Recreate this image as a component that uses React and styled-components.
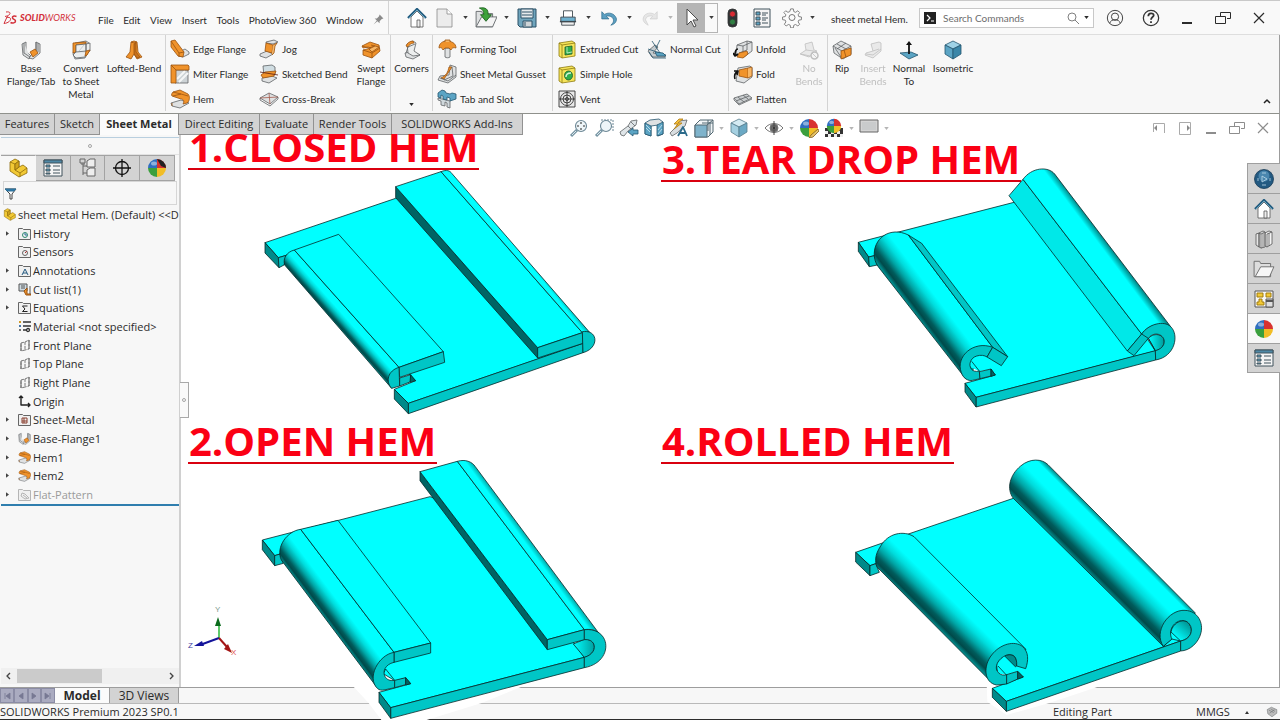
import React from "react";
import styled, { createGlobalStyle } from "styled-components";

const GlobalStyle = createGlobalStyle`
  * {
    box-sizing: border-box;
  }
  body {
    margin: 0;
    background: #fff;
    color: #2b2b2b;
    font-family: "Open Sans", "Noto Sans", sans-serif;
    font-size: 11px;
  }
  button, input {
    font: inherit;
    color: inherit;
  }
  svg {
    display: block;
    flex: none;
  }
`;

const Page = styled.div`
  height: 100vh;
  display: flex;
  flex-direction: column;
  overflow: hidden;
  background: #fff;
`;

const PlainButton = styled.button`
  display: flex;
  align-items: center;
  justify-content: center;
  padding: 0;
  border: 0;
  background: none;
  cursor: pointer;
`;

/* ---------- title bar ---------- */

const TitleBar = styled.header`
  height: 35px;
  flex: none;
  display: flex;
  align-items: center;
  background: #f9f9f9;
  border-top: 1px solid #c9c9c9;
  border-bottom: 1px solid #dedede;
  font-family: Lato, "Open Sans", sans-serif;
  font-size: 10px;
`;

const Brand = styled.div`
  width: 96px;
  padding-left: 3px;
  display: flex;
  align-items: center;
  gap: 3px;
  color: #d3313b;
  font-size: 9px;
  font-style: italic;
  white-space: nowrap;

  b {
    font-weight: 900;
  }
`;

const Menu = styled.nav`
  width: 293px;
  height: 100%;
  padding: 4px 4px 0 2px;
  display: flex;
  align-items: center;
  justify-content: space-between;
  border-right: 1px solid #d4d4d4;
`;

const QuickTools = styled.div`
  display: flex;
  align-items: center;
  padding-left: 14px;
`;

const ToolCell = styled(PlainButton)`
  width: ${props => props.w || 28}px;
  height: 28px;
`;

const CaretCell = styled(PlainButton)`
  width: ${props => props.w || 13}px;
  height: 28px;
  color: ${props => (props.dim ? "#b5b5b5" : "#3c3c3c")};
`;

const PointerBox = styled.div`
  display: flex;
  border: 1px solid #b4b4b4;

  ${ToolCell} {
    background: #b5b5b5;
  }
`;

const DocName = styled.div`
  margin-left: 12px;
  padding-top: 2px;
  white-space: nowrap;
`;

const SearchBox = styled.label`
  width: 175px;
  height: 20px;
  margin-left: auto;
  padding: 0 4px;
  display: flex;
  align-items: center;
  gap: 5px;
  background: #fff;
  border: 1px solid #c8c8c8;

  input {
    flex: 1;
    min-width: 0;
    padding: 0 0 0 2px;
    border: 0;
    outline: 0;
    background: none;
  }
  input::placeholder {
    color: #6d6d6d;
    opacity: 1;
  }
`;

const WindowButtons = styled.div`
  display: flex;
  padding: 0 3px;

  ${ToolCell} {
    width: 36px;
  }
`;

/* ---------- ribbon ---------- */

const Ribbon = styled.div`
  height: 79px;
  flex: none;
  display: flex;
  background: #f7f7f7;
  border-right: 1px solid #9c9c9c;
  border-bottom: 1px solid #8f918c;
  font-family: Lato, "Open Sans", sans-serif;
  font-size: 10px;
`;

const Group = styled.div`
  display: flex;
  width: ${props => props.w}px;
  height: 76px;
  padding-left: ${props => props.pad || 0}px;
  border-right: 1px solid #d3d3d3;
`;

const LastGroup = styled.div`
  flex: 1;
  display: flex;
`;

const Stack = styled.div`
  width: ${props => props.w}px;
  display: grid;
  grid-template-rows: repeat(3, 1fr);
`;

const SmallButton = styled(PlainButton)`
  justify-content: flex-start;
  gap: 3px;
  padding-top: 2px;
  white-space: nowrap;
`;

const BigButton = styled(PlainButton)`
  width: ${props => props.w}px;
  flex-direction: column;
  justify-content: flex-start;
  gap: 2px;
  padding-top: 5px;
  line-height: 13px;
  color: ${props => (props.disabled ? "#b9b9b9" : "inherit")};
  opacity: ${props => (props.disabled ? 0.9 : 1)};

  svg {
    filter: ${props => (props.disabled ? "grayscale(1) opacity(0.35)" : "none")};
  }
`;

const DropArrow = styled.span`
  margin-top: 26px;
`;

const Collapse = styled(PlainButton)`
  margin: auto 5px 5px auto;
  width: 14px;
  height: 14px;
`;

/* ---------- command tabs + view tools ---------- */

const TabRow = styled.div`
  height: 21px;
  flex: none;
  display: flex;
  align-items: flex-start;
  justify-content: space-between;
  border-right: 1px solid #9c9c9c;
`;

const Tabs = styled.div`
  display: flex;
  width: 523px;
  height: 21px;
`;

const Tab = styled.button`
  width: ${props => props.w}px;
  padding: 0 0 2px;
  border: 0;
  border-right: 1px solid #929292;
  border-bottom: ${props => (props.active ? "0" : "1px solid #929292")};
  background: ${props => (props.active ? "#fbfbfb" : "#d3d3d3")};
  font-weight: ${props => (props.active ? 700 : 400)};
  white-space: nowrap;
`;

const ViewTools = styled.div`
  display: flex;
  align-items: center;
  margin-right: auto;
  margin-left: 43px;
`;

const ViewCell = styled(PlainButton)`
  width: 25px;
  height: 28px;
`;

const DocButtons = styled.div`
  display: flex;
  padding-right: 3px;
  color: #8d8d8d;

  ${ViewCell} {
    width: 26px;
  }
`;

/* ---------- workspace ---------- */

const Workspace = styled.div`
  flex: 1;
  min-height: 0;
  display: flex;
`;

const SidePanel = styled.aside`
  width: 181px;
  flex: none;
  display: flex;
  flex-direction: column;
  padding-left: 1px;
  background: #f7f7f7;
  border-right: 2px solid #d0d0d0;
`;

const Grip = styled.div`
  height: 18px;
  margin-top: 2px;
  display: flex;
  align-items: center;
  justify-content: center;
  border-top: 1px solid #b9cfdf;
  border-bottom: 1px solid #e2e2e2;
`;

const Dot = styled.i`
  width: 4px;
  height: 4px;
  border: 1px solid #a5a5a5;
  border-radius: 50%;
`;

const PanelTabs = styled.div`
  display: flex;
  height: 26px;
  margin: 0 4px 0 0;
`;

const PanelTab = styled(PlainButton)`
  flex: 1;
  border: 1px solid #a3a3a3;
  border-left: 0;
  border-color: ${props => (props.active ? "#a3a3a3 #f7f7f7 #f7f7f7" : "#a3a3a3")};
  background: ${props => (props.active ? "#f7f7f7" : "#d3d3d3")};
`;

const FilterBox = styled.label`
  display: flex;
  align-items: center;
  height: 24px;
  margin: 0 2px;
  border: 1px solid #d6d6d6;

  input {
    flex: 1;
    min-width: 0;
    border: 0;
    outline: 0;
    background: none;
  }
`;

const Tree = styled.ul`
  height: 301px;
  margin: 0;
  padding: 0;
  display: grid;
  grid-auto-rows: 1fr;
  list-style: none;
  border-bottom: 2px solid #2f7eae;
  overflow: hidden;
`;

const TreeRow = styled.li`
  display: flex;
  align-items: center;
  gap: 2px;
  padding-left: ${props => (props.root ? 2 : 0)}px;
  white-space: nowrap;
  color: ${props => (props.dim ? "#9a9a9a" : "inherit")};
`;

const Expander = styled.span`
  width: 15px;
  padding-left: 5px;
`;

const ScrollRow = styled.div`
  display: flex;
  height: 16px;
  margin-top: auto;
  margin-bottom: 3px;
  background: #f0f0f0;
`;

const ScrollButton = styled(PlainButton)`
  width: 16px;
`;

const ScrollTrack = styled.div`
  flex: 1;
  margin: 1px 0;
`;

const ScrollThumb = styled.div`
  width: 58%;
  height: 14px;
  background: #cbcbcb;
`;

const Canvas = styled.main`
  position: relative;
  z-index: 1;
  flex: 1;
  display: flex;
  align-items: flex-start;
  justify-content: flex-end;
  border-right: 1px solid #9c9c9c;
`;

const Placed = styled.div`
  position: absolute;
  left: ${props => props.x}px;
  top: ${props => props.y}px;
`;

const Caption = styled.h2`
  margin: 0;
  padding: 0 1px;
  color: #fb0014;
  font-size: 40px;
  font-weight: 700;
  line-height: 42px;
  white-space: nowrap;
  border-bottom: 2px solid #d9000f;
`;

const Splitter = styled.div`
  position: absolute;
  left: -1px;
  top: 247px;
  width: 9px;
  height: 36px;
  display: flex;
  align-items: center;
  justify-content: center;
  background: #fafafa;
  border: 1px solid #a9a9a9;
  border-left: 0;
`;

const TaskPane = styled.div`
  width: 33px;
  margin-top: 28px;
  margin-right: -1px;
  display: flex;
  flex-direction: column;
  border: 1px solid #9f9f9f;
  border-right: 0;
`;

const TaskButton = styled(PlainButton)`
  height: 30px;
  background: ${props => (props.active ? "#f7f7f7" : "#d3d3d3")};
  border-bottom: 1px solid #9f9f9f;

  &:last-child {
    height: 28px;
    border-bottom: 0;
  }
`;

/* ---------- bottom ---------- */

const ModelBar = styled.div`
  height: 17px;
  flex: none;
  display: flex;
  background: #f7f7f7;
  border-top: 1px solid #9d9d9d;
  border-bottom: 1px solid #b9b9b9;
`;

const StepButtons = styled.div`
  display: flex;
  width: 55px;

  ${PlainButton} {
    flex: 1;
    background: #aaabc0;
    border: 1px solid #8b8ca5;
    color: #777893;
  }
`;

const ModelTab = styled.button`
  width: ${props => props.w}px;
  padding: 0;
  border: 0;
  border-right: 1px solid #9d9d9d;
  background: ${props => (props.active ? "#fbfbfb" : "#d3d3d3")};
  font-size: 12px;
  line-height: 14px;
  font-weight: ${props => (props.active ? 700 : 400)};
`;

const StatusBar = styled.footer`
  height: 16px;
  flex: none;
  display: flex;
  align-items: center;
  background: #f7f7f7;
  border-bottom: 1px solid #2c2c2c;
  white-space: nowrap;
`;

const StatusText = styled.span`
  width: ${props => (props.w ? props.w + "px" : "auto")};
  margin-left: ${props => (props.right ? "auto" : 0)};
  line-height: 14px;
`;

const StatusIcon = styled.span`
  padding: 0 2px 0 17px;
`;

/* ---------- icons ---------- */

const O = "#f0932b";
const OD = "#9a5310";
const G = "#dfe1e2";
const GD = "#5f6366";
const B = "#5ba4c4";
const BD = "#24566f";

const Icon = ({ size = 20, box = 20, stroke = GD, sw = 0.8, children }) => (
  <svg
    width={size}
    height={size}
    viewBox={`0 0 ${box} ${box}`}
    fill="none"
    stroke={stroke}
    strokeWidth={sw}
    strokeLinejoin="round"
    aria-hidden="true"
  >
    {children}
  </svg>
);

const Caret = ({ size = 5 }) => (
  <svg width={size} height={3} viewBox="0 0 6 4" aria-hidden="true">
    <path d="M0 0h6L3 4z" fill="currentColor" />
  </svg>
);

const BaseFlange = ({ size = 20 }) => (
  <Icon size={size}>
    <path d="M1 4l4-2v9l5 5-2 3-6-4z" fill={G} />
    <path d="M3 3v10l6 4M15 2l4 2v9l-7 6-4-1 3-4 4-3z" fill={G} />
    <path d="M15 2v9M17 3v9" />
    <path d="M9 12l5-3 3 4-5 4z" fill={O} stroke={OD} />
  </Icon>
);

const Convert = () => (
  <Icon>
    <path d="M4 3l11-2 3 2v8l-4 7-10 1-2-5z" fill={G} />
    <path d="M2 3l13-1v2L5 5v7l-3 1z" fill={O} stroke={OD} />
    <path d="M5 5l10-1v7L5 12zM15 4l4-1v8l-4 1zM5 12l-3 3 3 3 9-1 2-4" fill="#edefef" />
    <path d="M15 11l4-1-3 5-2 1z" fill={O} stroke={OD} />
    <path d="M8 11l5-6" stroke="#bcc3c6" />
  </Icon>
);

const Lofted = () => (
  <Icon stroke={OD}>
    <path d="M7 2l3-1 3 1 1 10 4 5-5 2-3-5-3 5-5-2 4-5z" fill={O} />
    <path d="M10 4v10l3 4 3-1-4-5V3z" fill="#c8711a" />
    <path d="M7 2l3 1 3-1" />
  </Icon>
);

const EdgeFlange = () => (
  <Icon>
    <path d="M9 13l6-3 4 3v2l-6 3-4-1z" fill={G} />
    <path d="M1 2l4-1 9 12-1 5-5-1L1 8z" fill={O} stroke={OD} />
    <path d="M1 2l8 12v4M9 14l5-1" stroke={OD} />
  </Icon>
);

const Miter = () => (
  <Icon>
    <path d="M5 6h13v13H5z" fill="#cdd3d6" />
    <path d="M7 15l8-8M9 18l9-9" stroke="#f5f6f6" strokeWidth="2" />
    <path d="M1 1h17l1 1v4H6v13H1z" fill={O} stroke={OD} />
    <path d="M1 1l5 5" stroke={OD} />
  </Icon>
);

const Hem = ({ size = 20 }) => (
  <Icon size={size}>
    <path d="M1 14l10-3 8 3-9 5-8-2z" fill={G} />
    <path d="M3 3l7-2 8 4c2 2 2 7-1 9l-4 1c2-3 0-5-2-5l-9-3C1 6 2 4 3 3z" fill={O} stroke={OD} />
    <path d="M3 7l8-2 7 2M3 3l8 2M2 14v3" stroke={OD} />
  </Icon>
);

const Jog = () => (
  <Icon>
    <path d="M1 15l7-3 6 3-7 4-6-2z" fill={G} />
    <path d="M7 3l8-2 4 2-5 2-7-1z" fill={G} />
    <path d="M7 4l7 2-1 8-7-2z" fill={O} stroke={OD} />
    <path d="M14 6l4-2-2 3-1 7-2 2" fill="#f8b766" stroke={OD} />
  </Icon>
);

const SketchedBend = () => (
  <Icon>
    <path d="M4 2l9-1 3 2v7l-11 2z" fill="#d0dde2" />
    <path d="M3 14l10-2 5 2-8 5-7-2z" fill={G} />
    <path d="M2 11l4-3 11-1-2 5-11 2z" fill={O} stroke={OD} />
    <path d="M1 8l18 3" stroke="#5a1c12" />
  </Icon>
);

const CrossBreak = () => (
  <Icon>
    <path d="M1 9l9-5 9 4-8 7z" fill={G} />
    <path d="M1 9l18-1M10 4l1 11" stroke="#a65a4c" />
    <path d="M1 9v2l10 6 8-7V8" />
  </Icon>
);

const Swept = () => (
  <Icon stroke={OD}>
    <path d="M1 6l8-4 9 3 1 6-8 7-9-3v-5l8-2-3-1-5 1z" fill={O} />
    <path d="M1 6l7 2 6-2-4-1M11 18v-5l8-5M11 13l-9-3" />
    <path d="M8 9l6-3 4 1-7 5z" fill="#f8b766" />
  </Icon>
);

const Corners = () => (
  <Icon>
    <path d="M3 13l7-1 8 3-7 4-7-2z" fill={G} />
    <path d="M5 4l6-3 3 2-2 8 6 4-7 1-5-3z" fill="#eceeee" />
    <path d="M4 6c1-3 4-5 7-5l1 2c-3 0-5 2-6 4z" fill={O} stroke={OD} />
    <path d="M6 7l7-3M4 13l2-6" />
  </Icon>
);

const Forming = () => (
  <Icon>
    <path d="M8 9h5v9c-1 1-4 1-5 0z" fill={G} />
    <path d="M2 9c0-5 4-7 8-7s9 2 9 7c-3-1-4 0-5 2l-2-2H8l-2 2C5 9 4 8 2 9z" fill={O} stroke={OD} />
    <path d="M8 3V1h5v2" fill="#f8b766" stroke={OD} />
  </Icon>
);

const Gusset = () => (
  <Icon>
    <path d="M13 1l6 2v10l-8 6-10-3 2-4 9-1z" fill={G} />
    <path d="M15 3L7 15l-3-1c5-2 7-6 8-11z" fill={O} stroke={OD} />
    <path d="M15 3l1 9-9 4M3 14l8 3 8-6" />
  </Icon>
);

const TabSlot = () => (
  <Icon stroke={BD}>
    <path d="M1 9l12 3v7l-3-1v-4l-2-1v4l-4-1v-4l-3-1z" fill="#cfd8dc" stroke={GD} />
    <path d="M1 4l4-3 3 1 1 2 4 1 2-1 4 1v5l-6 2v-3l-3-1v3l-4-1V7L4 6v3L1 8z" fill={B} />
  </Icon>
);

const Extruded = () => (
  <Icon stroke="#8d7a10">
    <path d="M2 4l13-2 3 2v13l-13 2-3-2z" fill="#f6e45a" />
    <path d="M5 6l13-2M5 6v13M2 4l3 2" />
    <path d="M8 8l7-1v8l-7 1z" fill="#2fae4e" stroke="#1f5c2c" />
    <path d="M10 8v6l5-1" stroke="#d2f3d5" />
  </Icon>
);

const SimpleHole = () => (
  <Icon stroke="#8d7a10">
    <path d="M2 4l13-2 3 2v13l-13 2-3-2z" fill="#f6e45a" />
    <path d="M5 6l13-2M5 6v13M2 4l3 2" />
    <ellipse cx="11.500" cy="11.500" rx="4" ry="4.500" fill="#2fae4e" stroke="#1f5c2c" />
    <path d="M9 13c0-3 2-4 5-4" stroke="#d2f3d5" strokeWidth="1.500" />
  </Icon>
);

const Vent = () => (
  <Icon stroke="#333" sw={0.9}>
    <path d="M2 2h16v16H2z" fill="#e9e9e9" />
    <circle cx="10" cy="10" r="6.500" />
    <circle cx="10" cy="10" r="4" />
    <circle cx="10" cy="10" r="1.500" />
    <path d="M10 2v16M2 10h16" />
  </Icon>
);

const NormalCut = () => (
  <Icon>
    <path d="M1 12l7-6 3 2-5 6 12 2v2H5z" fill="#c4ccd0" />
    <path d="M5 2l8 12M13 1L9 9M1 10l18 6M2 13l4 6h13" stroke={BD} />
    <path d="M8 13l8 1 3 3h-9z" fill={B} stroke={BD} />
  </Icon>
);

const Unfold = () => (
  <Icon>
    <path d="M4 6l10-4 5 1v9l-8 6-8-2z" fill={G} />
    <path d="M4 6l6 1v9M10 7l9-4M14 2v9l-8 3" />
    <path d="M6 14l8-2 1 3-5 4-6-1z" fill={O} stroke={OD} />
    <path d="M5 10c-3 0-3 3-3 6M0 14l2 3 3-2" stroke="#111" strokeWidth="1.600" />
  </Icon>
);

const Fold = () => (
  <Icon>
    <path d="M5 4l12-2 2 2v9l-8 6-8-2z" fill={G} />
    <path d="M6 6l9-2v10l-9-2z" fill={O} stroke={OD} />
    <path d="M15 4l4-1v9l-4 2" fill="#f8b766" stroke={OD} />
    <path d="M2 15c-1-4 0-6 2-7M1 7l4 0-1 4" stroke="#111" strokeWidth="1.600" />
  </Icon>
);

const Flatten = () => (
  <Icon>
    <path d="M1 9l13-4 5 4-13 6z" fill="#c9cdcf" />
    <path d="M5 8l6 5M10 6l5 4M3 12l13-5M1 9v2l5 5 13-6" />
  </Icon>
);

const NoBends = () => (
  <Icon stroke="#444">
    <path d="M6 4l7-2 2 8 3 1-8 6-9-3 6-4z" fill="#ccc" />
    <path d="M7 10l8 1M2 14l9 2" />
    <circle cx="15.500" cy="15.500" r="3.500" fill="#eee" strokeWidth="1.500" />
    <path d="M13 13l5 5" />
  </Icon>
);

const Rip = () => (
  <Icon>
    <path d="M1 6l8-5 10 5v8l-8 5-9-6z" fill={G} />
    <path d="M1 6l9 5 9-5M10 11v8M5 4l9 5M14 3L5 9M3 8l6 9" />
    <path d="M9 11l10-3v7l-10 4z" fill={O} stroke={OD} />
    <path d="M12 10l2 7" stroke={OD} />
  </Icon>
);

const InsertBends = () => (
  <Icon stroke="#444">
    <path d="M8 4l8-2 2 1v8l-8 7-8-3 1-2 7-2z" fill="#ccc" />
    <path d="M10 11l6-2M3 14l7 1 8-6" />
  </Icon>
);

const NormalTo = () => (
  <Icon stroke={BD}>
    <path d="M1 13l11-1 7 3-9 4z" fill={B} />
    <path d="M10 14V4" stroke="#111" strokeWidth="1.800" />
    <path d="M7 5l3-4 3 4z" fill="#111" stroke="none" />
  </Icon>
);

const IsoCube = ({ size = 20, light }) => (
  <Icon size={size} stroke={light ? "#557b8c" : BD}>
    <path d="M10 1l8 4-8 4-8-4z" fill={light ? "#d5ebf3" : "#9fd2e6"} />
    <path d="M2 5l8 4v10l-8-5z" fill={light ? "#a5d0e1" : B} />
    <path d="M18 5l-8 4v10l8-5z" fill={light ? "#6ba9c4" : "#3b86a8"} />
  </Icon>
);

const HomeIcon = () => (
  <Icon stroke="#555">
    <path d="M4 9v10h12V9l-6-6z" fill="#fff" />
    <path d="M10 12h3v7h-3z" fill="#eee" />
    <path d="M1 10l9-9 9 9" stroke="#235d80" strokeWidth="2.400" />
    <path d="M2 10l8-8 8 8" stroke="#7bb6d0" strokeWidth="0.800" />
  </Icon>
);

const NewDoc = () => (
  <Icon stroke="#8a8a8a">
    <path d="M2 1h10l5 5v13H2z" fill="#ececec" />
    <path d="M12 1v5h5" fill="#fff" />
  </Icon>
);

const OpenDoc = () => (
  <Icon size={22}>
    <path d="M1 4h5l1 2h9v12H1z" fill={G} />
    <path d="M1 18l5-9h14l-4 9z" fill="#f4f4f4" />
    <path d="M4 1c6-1 8 1 8 6h3l-5 6-5-6h3c0-3-1-5-4-6z" fill="#3da23a" stroke="#1f6120" />
  </Icon>
);

const SaveIcon = () => (
  <Icon stroke="#2d5166" sw={1}>
    <path d="M1 1h18v18H3l-2-2z" fill="#6fa5bd" />
    <path d="M4 1h12v9H4z" fill="#e6ebee" />
    <path d="M6 13h9v6H6z" fill="#cfd5d8" />
    <path d="M8 14v4M5 4h10M5 7h10" />
  </Icon>
);

const PrintIcon = () => (
  <Icon size={18} stroke="#3f4a50" sw={1}>
    <path d="M5 9V2h10v7" fill="#fff" />
    <path d="M2 9h16v5H2z" fill="#70b2d0" />
    <path d="M3 14h14v4H3z" fill="#eee" />
    <path d="M1 14h18" strokeWidth="1.600" />
  </Icon>
);

const UndoIcon = ({ dim }) => (
  <Icon size={18} stroke={dim ? "#cfcfcf" : "#2e6c8d"}>
    <path
      d={dim ? "M18 3v8h-8l3-3c-4-1-7 0-8 4l3 6c-6-3-7-7-4-11 3-3 8-3 11-1z" : "M2 3v8h8L7 8c4-1 8 1 8 5 0 2-1 3-3 5 5-1 7-5 6-8C16 5 10 3 5 6z"}
      fill={dim ? "#e6e6e6" : "#5b9fc1"}
    />
  </Icon>
);

const PointerIcon = () => (
  <Icon stroke="#4b4b4b" sw={1}>
    <path d="M5 1v16l4-4 3 6 2-1-3-6h5z" fill="#fff" />
  </Icon>
);

const TrafficIcon = () => (
  <Icon stroke="#333">
    <rect x="6" y="1" width="9" height="18" rx="4" fill="#2e3436" />
    <circle cx="10.500" cy="6" r="3" fill="#d92a33" />
    <circle cx="10.500" cy="14" r="3" fill="#2f7f42" />
  </Icon>
);

const ListIcon = () => (
  <Icon stroke="#41525c" sw={1}>
    <path d="M2 1h16v18H2z" fill="#f4f4f4" />
    <path d="M4 4h4v3H4zM4 9h4v3H4zM4 14h4v3H4z" fill={B} />
    <path d="M10 5h6M10 7h4M10 10h6M10 12h4M10 15h6" />
  </Icon>
);

const WideListIcon = () => (
  <Icon size={20} stroke="#41525c" sw={1}>
    <path d="M1 2h18v16H1z" fill="#f4f4f4" />
    <path d="M1 2h18v3H1z" fill="#4d87a5" />
    <path d="M3 7h4v2H3zM3 11h4v2H3zM3 15h4v1H3z" fill={B} />
    <path d="M10 8h7M10 12h7M10 15h7" />
  </Icon>
);

const GearIcon = () => (
  <Icon stroke="#777" sw={1}>
    <path
      d="M8.500 1h3l.5 3 2 .8 2.500-1.700 2 2-1.700 2.500.7 1.900 3 .5v3l-3 .5-.7 2 1.700 2.500-2 2-2.500-1.700-2 .8-.5 3h-3l-.5-3-2-.8-2.500 1.700-2-2 1.700-2.500-.7-2-3-.5v-3l3-.5.7-1.900L1 5.100l2-2 2.500 1.700 2-.8z"
      transform="translate(1 0) scale(.9)"
      fill="#fbfbfb"
    />
    <circle cx="10" cy="9.500" r="3" />
  </Icon>
);

const PinIcon = () => (
  <Icon size={11} stroke="none">
    <path d="M12 1l7 7-3 1-4 4v4l-4-4-7 6 6-7-4-4h4l4-4z" fill="#8b8b8b" />
  </Icon>
);

const LogoMark = () => (
  <svg width="14" height="14" viewBox="0 0 28 28" fill="none" stroke="#d3313b" strokeWidth="2" aria-hidden="true">
    <path d="M6 2c6-1 10 1 7 5-2 2-5 3-9 4M9 10L2 25c9-1 14-6 13-10-1-2-4-3-8-2" />
    <path d="M27 11c-5-2-9 0-8 3 1 3 6 3 6 6 0 4-6 5-10 3" strokeWidth="3" />
  </svg>
);

const PromptIcon = () => (
  <Icon size={12} box={12} stroke="#fff" sw={1.2}>
    <path d="M0 0h12v12H0z" fill="#222" stroke="none" />
    <path d="M3 3l3 3-3 3M7 9h3" />
  </Icon>
);

const Lens = () => (
  <Icon size={12} box={12} stroke="#808080" sw={1}>
    <circle cx="5" cy="5" r="4" />
    <path d="M8 8l4 4" />
  </Icon>
);

const UserIcon = () => (
  <Icon size={18} stroke="#444" sw={1.1}>
    <circle cx="10" cy="10" r="8.500" />
    <circle cx="10" cy="8.500" r="4" />
    <path d="M4 16c1-3 3-4 6-4s5 1 6 4" />
  </Icon>
);

const HelpIcon = () => (
  <Icon size={18} stroke="#333" sw={1.4}>
    <circle cx="10" cy="10" r="8.500" />
    <path d="M7 8c0-4 6-4 6-1 0 2-3 2-3 5" strokeWidth="2" />
    <path d="M10 13.500v2" strokeWidth="2" />
  </Icon>
);

const MinIcon = () => (
  <Icon size={16} box={16} stroke="currentColor" sw={2}>
    <path d="M3 13h10" />
  </Icon>
);

const RestoreIcon = () => (
  <Icon size={16} box={16} stroke="currentColor" sw={1}>
    <path d="M5.500 6V2.500h10v6H12M.5 6.500h10v7H.5z" />
  </Icon>
);

const CloseIcon = () => (
  <Icon size={16} box={16} stroke="currentColor" sw={1.2}>
    <path d="M3 3l10 10M13 3L3 13" />
  </Icon>
);

const PaneLeft = () => (
  <Icon size={16} box={16} stroke="#aaa" sw={1}>
    <path d="M2.500 12V3.500h11V13" />
    <path d="M6 5L3 8l3 3z" fill="#888" stroke="none" />
  </Icon>
);

const PaneRight = () => (
  <Icon size={16} box={16} stroke="#aaa" sw={1}>
    <path d="M2.500 2.500h11v12h-11z" />
    <path d="M10 5l3 3-3 3z" fill="#888" stroke="none" />
  </Icon>
);

const ZoomFit = ({ area }) => (
  <Icon stroke="#6c8795" sw={1.1}>
    {area && <path d="M7 2h12v12" strokeDasharray="2 1" strokeWidth="1" />}
    <circle cx="12" cy="8" r="5.500" fill="#eef5f8" />
    <path d="M8 12l-6 6" strokeWidth="3" stroke="#7795a4" />
    <path d="M7 13l-4 4" strokeWidth="1" stroke="#dbe7ec" />
    {!area && <path d="M12 4v2M12 10v2M8 8h2M14 8h2" stroke="#333" />}
  </Icon>
);

const PrevView = () => (
  <Icon>
    <path d="M1 14l8-6 3-5 6-1-1 5-8 6-4 5-3-1z" fill="#dfe5e8" />
    <path d="M9 8l4 4M12 4l4 4" />
    <path d="M9 14l5-4v2h5v4h-5v2z" fill={B} stroke={BD} />
  </Icon>
);

const Section = () => (
  <Icon stroke={BD}>
    <path d="M1 5l5-3 9-1 4 3v12l-5 2V7L7 8v10l-6-2z" fill={G} />
    <path d="M1 5l6 3v10l-6-2zM13 7l6-3v12l-6 2z" fill={B} />
    <path d="M2 10l4 4M2 7l5 5M14 12l4-5M14 16l4-5" stroke="#cfe7f1" />
  </Icon>
);

const Dynamic = () => (
  <Icon>
    <path d="M1 15l6-6 3-6 8-1-2 6-8 7-5 3z" fill="#d8dde0" />
    <path d="M10 1L5 6h4l-4 5 8-6H9l5-4z" fill="#f5bf3b" stroke="#b07c14" />
    <path d="M9 18l5-9 4 9M11 15h6" stroke="#2c6b8b" strokeWidth="1.800" />
  </Icon>
);

const ViewCube = () => (
  <Icon stroke="#526872" sw={1}>
    <path d="M1 7l5-5h13v12l-5 5H1z" fill="#f1f5f7" />
    <path d="M1 7h12v12H1z" fill="#7fb3cb" />
    <path d="M13 7l6-5M14 2v11M8 5h11M16 4v13" />
  </Icon>
);

const EyeIcon = () => (
  <Icon stroke="#777" sw={1}>
    <path d="M1 10c5-6 13-6 18 0-5 6-13 6-18 0z" fill="#fff" />
    <circle cx="10" cy="10" r="4" fill="#666" />
    <circle cx="10" cy="10" r="1.500" fill="#111" />
    <path d="M10 3v14" stroke="#444" />
  </Icon>
);

const Ball = ({ size = 20, extra }) => (
  <Icon size={size} stroke="none">
    {extra === "scene" && (
      <g>
        <path d="M1 10h18v9H1z" fill="#333" />
        <path d="M1 13h3v3H1zM7 13h3v3H7zM13 13h3v3h-3zM4 16h3v3H4zM10 16h3v3h-3zM16 16h3v3h-3z" fill="#eee" />
      </g>
    )}
    <g transform={extra === "scene" ? "translate(2 0) scale(.8)" : undefined}>
      <path d="M10 10V1a9 9 0 00-9 9z" fill="#2f6fc0" />
      <path d="M10 10V1a9 9 0 019 9z" fill="#d8322f" />
      <path d="M10 10H1a9 9 0 009 9z" fill="#3b9f3d" />
      <path d="M10 10h9a9 9 0 01-9 9z" fill="#f1bd26" />
      <ellipse cx="7" cy="5.500" rx="3" ry="2" fill="#fff" opacity="0.450" />
    </g>
    {extra === "edit" && <path d="M19 11l-7 6-2 3 4-1 6-6z" fill="#e7c46a" stroke="#7c5c1e" strokeWidth="0.800" />}
    {extra === "dark" && <path d="M10 1a9 9 0 019 9l-5-2z" fill="#222" />}
  </Icon>
);

const Monitor = () => (
  <Icon stroke="#666" sw={1}>
    <path d="M1 2h18v12H1z" fill="#d4d4d4" />
    <path d="M3 4h14v8H3z" fill="#c9cbcc" stroke="none" />
  </Icon>
);

const PartIcon = ({ size = 20 }) => (
  <Icon size={size} stroke="#8d6b0b">
    <path d="M2 4l5-3 4 2v6l4-2 4 3v5l-8 4-9-6z" fill="#f2c935" />
    <path d="M2 4l5 2v6l5 3v4M7 6l4-3M12 15l7-5M7 12l4-3" />
    <path d="M7 6l4-3v6l-4 3z" fill="#d2a51c" />
  </Icon>
);

const ConfigIcon = () => (
  <Icon stroke="#666" sw={1}>
    <path d="M3 1h5v4H3zM6 6v11M6 8h4M6 15h4M4 6h4" />
    <path d="M10 3l3-2h5v8h-8zM10 12l3-2h5v8h-8z" fill="#eee" />
  </Icon>
);

const TargetIcon = () => (
  <Icon stroke="#111" sw={1.3}>
    <circle cx="10" cy="10" r="6.500" />
    <path d="M10 1v18M1 10h18" />
  </Icon>
);

const FilterIcon = () => (
  <Icon size={13} box={13} stroke="#444" sw={1}>
    <path d="M1 2h11L8 7v5H6V7z" fill="#fff" />
    <path d="M1 2h11l-2 2H3z" fill="#2e7fb0" stroke="#2e6f96" />
  </Icon>
);

const FolderGlyph = ({ children, dim }) => (
  <Icon size={13} box={13} stroke={dim ? "#b5b5b5" : "#666"} sw={1}>
    <path d="M.5 1.500h4l1 1h7v10H.5z" fill="#f0f0f0" />
    {children}
  </Icon>
);

const MaterialIcon = () => (
  <Icon size={13} box={13} stroke="#333" sw={1.3}>
    <path d="M5 2h8M5 6h8M5 10h4" />
    <path d="M1 1h2v2H1z" fill="#d39a24" stroke="none" />
    <path d="M1 5h2v2H1z" fill="#4477aa" stroke="none" />
    <path d="M1 9h2v2H1z" fill="#777" stroke="none" />
    <circle cx="10" cy="10" r="1.500" />
  </Icon>
);

const PlaneIcon = () => (
  <Icon size={13} box={13} stroke="#666" sw={0.9}>
    <path d="M3 4l4-1v8l-4 1zM7 3l4-2v9l-4 1" strokeDasharray="3 1" />
    <path d="M3 4v8M11 1v9" />
  </Icon>
);

const OriginIcon = () => (
  <Icon size={13} box={13} stroke="#222" sw={1.4}>
    <path d="M3 2v8h9M1 3l2-2 2 2M10 8l2 2-2 2" />
  </Icon>
);

const CutIcon = () => (
  <Icon size={13} box={13} stroke="#555" sw={1}>
    <path d="M1 1h8v7H1z" fill="#cfdbe2" />
    <path d="M3 3h4M3 5h4" />
    <path d="M6 8l3-3v6h4v1H8z" fill={O} stroke={OD} />
    <path d="M12 3v8" />
  </Icon>
);

const DialIcon = () => (
  <Icon stroke="#163a56">
    <circle cx="10" cy="10" r="9.500" fill="#235a82" />
    <circle cx="10" cy="7" r="5.500" fill="#4a86ae" stroke="none" />
    <path d="M8 7l5 3-5 3zM4 9v3M16 9v3M8 4h4M8 16h4" stroke="#bcd9ea" />
  </Icon>
);

const BooksIcon = () => (
  <Icon stroke="#555">
    <path d="M2 5l3-1v14l-3-2zM5 4l4-2 2 1v14l-4 2-2-1z" fill="#e6e6e6" />
    <path d="M7 5l4-2v15l-4 1zM11 4l4-2 3 1v12l-5 3-2-1z" fill="#f4f4f4" />
    <path d="M5 4l2 1M13 5v13M13 5l5-2M15 4v13M9 4v14" />
  </Icon>
);

const FolderIcon = () => (
  <Icon size={22} stroke="#666">
    <path d="M1 3h5l1 2h9v12H1z" fill="#ddd" />
    <path d="M2 17l5-9h12l-4 9z" fill="#f6f6f6" />
  </Icon>
);

const PaletteIcon = () => (
  <Icon stroke="#555" sw={1}>
    <path d="M1 2h18v16H1z" fill="#f8f8f8" />
    <path d="M3 4h6v4H3zM12 4h5v4h-5zM5 10h3v3h2v3H3v-3h2z" fill="#f2c935" stroke="#a07c10" />
    <path d="M12 10h7v8h-7z" fill="#ddd" />
    <path d="M12 12h7" strokeWidth="2" />
  </Icon>
);

/* ---------- model drawings ---------- */

const TOP = "#00ffff";
const FRONT = "#00c6c6";
const SIDE = "#008a8a";
const DEEP = "#006464";

const Poly = ({ p, f }) => <polygon points={p} fill={f} />;

// shading across a roll, from its shadow side to its lit side
const Shade = ({ id, from, to, lit }) => (
  <linearGradient id={id} gradientUnits="userSpaceOnUse" x1={from[0]} y1={from[1]} x2={to[0]} y2={to[1]}>
    <stop offset="0" stopColor="#008c8c" />
    <stop offset="0.090" stopColor="#004a4a" />
    <stop offset="0.180" stopColor="#005c5c" />
    <stop offset="0.330" stopColor="#00a6a6" />
    <stop offset="0.480" stopColor="#00dcdc" />
    <stop offset="0.640" stopColor={TOP} />
    <stop offset="0.900" stopColor={TOP} />
    <stop offset="1" stopColor={lit || TOP} />
  </linearGradient>
);

const Drawing = ({ w, h, children }) => (
  <svg
    width={w}
    height={h}
    viewBox={`0 0 ${w * 3} ${h * 3}`}
    stroke="#062a2a"
    strokeWidth="2.400"
    strokeLinejoin="round"
    fill="none"
    aria-hidden="true"
  >
    {children}
  </svg>
);

const ClosedHem = () => (
  <Drawing w={360} h={300}>
    <defs>
      <Shade id="closedLeft" from={[264, 592]} to={[307, 554]} />
      <linearGradient id="closedRight" gradientUnits="userSpaceOnUse" x1="785" y1="367" x2="812" y2="345">
        <stop offset="0" stopColor={TOP} />
        <stop offset="0.500" stopColor={TOP} />
        <stop offset="1" stopColor="#009a9a" />
      </linearGradient>
    </defs>
    <Poly p="45,338 437,205 600,200 999,641 475,820 433,778 497,752 480,735 112,375 85,383" f={TOP} />
    <Poly p="45,338 85,383 87,413 45,369" f={SIDE} />
    <Poly p="85,383 112,375 102,405 87,413" f={FRONT} />
    <Poly p="475,820 999,640 999,668 475,851" f={FRONT} />
    <Poly p="433,778 475,820 475,851 433,807" f={SIDE} />
    <Poly p="437,170 863,653 863,684 437,203" f={DEEP} />
    <Poly p="437,170 573,125 997,608 863,653" f={TOP} />
    <Poly p="863,653 997,608 999,640 863,684" f={FRONT} />
    <path d="M573 125C590 118 600 122 606 131L1018 606L997 608Z" fill="url(#closedRight)" />
    <path d="M997 605C1046 598 1048 655 999 668Z" fill={FRONT} />
    <path d="M133 360C110 366 98 385 104 405L425 775L447 712Z" fill="url(#closedLeft)" />
    <Poly p="133,360 266,313 580,665 447,712" f={TOP} />
    <Poly p="447,712 580,665 584,697 449,742" f={FRONT} />
    <path d="M447 712C413 722 406 755 425 775L449 768Z" fill={FRONT} />
    <Poly p="449,744 482,734 482,755 449,768" f={FRONT} />
    <Poly p="482,734 497,752 480,757" f={DEEP} />
  </Drawing>
);

const OpenHem = () => (
  <Drawing w={440} h={305}>
    <defs>
      <Shade id="openLeft" from={[445, 622]} to={[522, 564]} />
      <linearGradient id="openRight" gradientUnits="userSpaceOnUse" x1="1020" y1="425" x2="1070" y2="388">
        <stop offset="0" stopColor={TOP} />
        <stop offset="0.600" stopColor={TOP} />
        <stop offset="1" stopColor="#007c7c" />
      </linearGradient>
      <linearGradient id="openInner" x1="0" y1="0" x2="1" y2="0">
        <stop offset="0" stopColor={TOP} />
        <stop offset="1" stopColor="#00a0a0" />
      </linearGradient>
    </defs>
    <path d="M518 812L566 864L604 915H740L905 864L1032 812Z" fill="#fff" stroke="none" />
    <Poly p="247,375 750,245 900,300 1213,727 632,878 597,832 692,806 677,788 644,797 600,770 300,417 284,422" f={TOP} />
    <Poly p="247,375 284,422 284,452 247,404" f={SIDE} />
    <Poly p="284,422 300,417 310,445 284,452" f={FRONT} />
    <Poly p="632,878 1213,727 1213,758 632,910" f={FRONT} />
    <Poly p="597,832 632,878 632,910 597,862" f={SIDE} />
    <path d="M1180 687L1213 673C1250 670 1256 715 1213 727Z" fill="url(#openInner)" />
    <Poly p="720,170 1102,674 1102,704 720,197" f={DEEP} />
    <Poly p="720,170 832,139 1213,644 1102,674" f={TOP} />
    <Poly p="1102,674 1213,644 1213,674 1102,704" f={FRONT} />
    <path d="M832 139C856 132 876 140 886 155L1262 662C1250 645 1232 641 1213 644Z" fill="url(#openRight)" />
    <path d="M1213 644C1296 636 1302 742 1213 758V727C1256 715 1250 670 1213 674Z" fill={FRONT} />
    <path d="M362 343C322 348 286 396 304 435L590 816L642 712Z" fill="url(#openLeft)" />
    <path d="M642 730L606 760L617 762L644 797L700 780L720 720Z" fill={TOP} stroke="none" />
    <Poly p="362,343 474,316 752,684 642,712" f={TOP} />
    <Poly p="642,712 752,684 752,714 642,742" f={FRONT} />
    <path d="M642 712C594 720 560 790 592 820C598 826 606 826 612 825L644 818V796C606 803 598 752 642 742Z" fill={FRONT} />
    <path d="M617 762L644 796" />
    <Poly p="644,796 677,788 677,809 644,818" f={FRONT} />
    <Poly p="677,788 692,806 677,810" f={DEEP} />
  </Drawing>
);

const TearDropHem = () => (
  <Drawing w={360} h={260}>
    <defs>
      <Shade id="tearLeft" from={[249, 491]} to={[348, 416]} />
      <linearGradient id="tearRight" gradientUnits="userSpaceOnUse" x1="755" y1="310" x2="815" y2="265">
        <stop offset="0" stopColor={TOP} />
        <stop offset="0.700" stopColor={TOP} />
        <stop offset="1" stopColor="#008080" />
      </linearGradient>
      <linearGradient id="tearInner" x1="0" y1="0" x2="1" y2="0">
        <stop offset="0" stopColor={TOP} />
        <stop offset="1" stopColor="#009a9a" />
      </linearGradient>
    </defs>
    <Poly p="55,247 522,127 700,200 946,573 408,712 375,670 466,645 453,628 112,285 86,291" f={TOP} />
    <Poly p="55,247 86,291 88,320 55,274" f={SIDE} />
    <Poly p="86,291 103,287 112,315 88,320" f={FRONT} />
    <Poly p="408,712 946,572 947,600 408,741" f={FRONT} />
    <Poly p="375,670 408,712 408,741 375,696" f={SIDE} />
    <Poly p="507,107 549,58 905,522 862,573" f="#00e8e8" />
    <path d="M549 58C575 22 624 18 644 42L992 500C962 485 925 495 905 522Z" fill="url(#tearRight)" />
    <path d="M925 535C945 514 976 525 972 548C970 562 958 570 946 572Z" fill="url(#tearInner)" />
    <path d="M905 522C925 492 972 480 992 500C1018 524 1006 590 947 600L946 572C980 564 980 530 955 523C942 520 932 526 925 535L882 587L862 573Z" fill={FRONT} />
    <path d="M905 522L925 535L946 572" />
    <path d="M205 225C150 198 98 235 103 290C105 308 113 318 120 327L376 655L458 562Z" fill="url(#tearLeft)" />
    <path d="M441 589C410 580 380 600 392 622L418 634L453 628L490 610Z" fill={TOP} stroke="none" />
    <Poly p="205,225 245,250 503,590 458,562" f={FRONT} />
    <path d="M458 562C400 540 346 590 364 638C370 655 384 664 398 661L420 656L418 633C384 642 380 597 410 588C422 584 434 586 441 591Z" fill={FRONT} />
    <Poly p="458,562 503,590 484,617 441,591" f={FRONT} />
    <path d="M395 604L418 633" />
    <Poly p="418,635 453,627 453,648 420,656" f={FRONT} />
    <Poly p="453,627 466,645 453,649" f={DEEP} />
  </Drawing>
);

const RolledHem = () => (
  <Drawing w={440} h={280}>
    <defs>
      <Shade id="rollLeft" from={[277, 548]} to={[375, 448]} />
      <Shade id="rollRight" from={[745, 397]} to={[845, 297]} lit="#009090" />
      <linearGradient id="rollInner" x1="0" y1="1" x2="1" y2="0">
        <stop offset="0" stopColor={TOP} />
        <stop offset="0.400" stopColor={TOP} />
        <stop offset="1" stopColor="#008080" />
      </linearGradient>
    </defs>
    <path d="M440 730L442 785L500 825L625 790L770 742V735Z" fill="#fff" stroke="none" />
    <Poly p="47,337 205,282 520,175 700,250 1022,603 499,784 457,745 550,711 533,694 110,370 90,377" f={TOP} />
    <Poly p="47,337 90,377 90,407 47,366" f={SIDE} />
    <Poly p="90,377 107,371 118,397 90,407" f={FRONT} />
    <Poly p="499,784 1022,603 1022,633 499,814" f={FRONT} />
    <Poly p="457,745 499,784 499,814 457,772" f={SIDE} />
    <path d="M520 175C498 146 510 104 542 78C570 54 606 56 624 74L1066 519L970 619Z" fill="url(#rollRight)" />
    <path d="M970 619L995 597L1022 603C1052 598 1062 570 1048 552C1035 532 1000 545 993 575Z" fill="url(#rollInner)" />
    <path d="M970 619C940 575 985 508 1035 511C1075 513 1090 550 1083 578C1076 608 1050 632 1022 633V603C1052 598 1062 570 1048 552C1032 530 996 545 992 575C991 585 993 592 996 597Z" fill={FRONT} />
    <path d="M992 575L1022 603" />
    <path d="M222 290C190 270 144 280 122 318C104 345 104 366 112 382L442 714L558 628Z" fill="url(#rollLeft)" />
    <path d="M500 643L472 670L474 700L500 705L533 694L560 700L556 680Z" fill={TOP} stroke="none" />
    <path d="M530 678C532 650 520 640 500 645L494 648L526 680Z" fill={SIDE} />
    <path d="M470 735C430 728 430 676 455 645C480 612 524 600 548 620C566 636 566 660 557 686L530 678C532 650 520 640 500 645C474 655 460 682 475 698C482 705 490 707 500 704V732Z" fill={FRONT} />
    <path d="M474 678L500 706" />
    <Poly p="500,704 533,694 533,717 500,732" f={FRONT} />
    <Poly p="533,694 550,711 533,717" f={DEEP} />
  </Drawing>
);

const Triad = () => (
  <svg width="54" height="56" viewBox="0 0 54 56" fontSize="8" fontFamily="Liberation Sans" aria-hidden="true">
    <path d="M33 35V20" stroke="#5ecb6a" strokeWidth="2" />
    <path d="M29 23l3-9 3 9z" fill="#0a6b1c" />
    <path d="M33 35L14 42" stroke="#14149a" strokeWidth="2" />
    <path d="M8 43l8-5 2 5z" fill="#14149a" />
    <path d="M33 35l8 9" stroke="#a31515" strokeWidth="2" />
    <path d="M46 50l-8-4 4-5z" fill="#a31515" />
    <text x="29" y="9" fill="#7d9a90">Y</text>
    <text x="2" y="45" fill="#3c3ca0">Z</text>
    <text x="45" y="52" fill="#e05555">X</text>
  </svg>
);

/* ---------- data ---------- */

const menus = ["File", "Edit", "View", "Insert", "Tools", "PhotoView 360", "Window"];

const commandTabs = [
  { label: "Features", w: 55 },
  { label: "Sketch", w: 45 },
  { label: "Sheet Metal", w: 79, active: true },
  { label: "Direct Editing", w: 81 },
  { label: "Evaluate", w: 54 },
  { label: "Render Tools", w: 78 },
  { label: "SOLIDWORKS Add-Ins", w: 131 }
];

const treeItems = [
  { label: "History", open: true, icon: <FolderGlyph><circle cx="7" cy="8" r="2.500" stroke="#2f8a70" /><path d="M7 6v2h2" stroke="#2f6fa0" /></FolderGlyph> },
  { label: "Sensors", icon: <FolderGlyph><circle cx="7" cy="8" r="2.500" /><path d="M7 8l2-2" stroke="#b03030" /></FolderGlyph> },
  { label: "Annotations", open: true, icon: <FolderGlyph><path d="M4 11l3-6 3 6M5 9h4" stroke="#245a80" /></FolderGlyph> },
  { label: "Cut list(1)", open: true, icon: <CutIcon /> },
  { label: "Equations", open: true, icon: <FolderGlyph><path d="M9.500 5h-5L7 8l-2.500 2.500h5" stroke="#222" /></FolderGlyph> },
  { label: "Material <not specified>", icon: <MaterialIcon /> },
  { label: "Front Plane", icon: <PlaneIcon /> },
  { label: "Top Plane", icon: <PlaneIcon /> },
  { label: "Right Plane", icon: <PlaneIcon /> },
  { label: "Origin", icon: <OriginIcon /> },
  { label: "Sheet-Metal", open: true, icon: <FolderGlyph><path d="M4 5h5v5H4zM6 5v5M4 8h5" stroke="#8a4030" /></FolderGlyph> },
  { label: "Base-Flange1", open: true, icon: <BaseFlange size={13} /> },
  { label: "Hem1", open: true, icon: <Hem size={13} /> },
  { label: "Hem2", open: true, icon: <Hem size={13} /> },
  { label: "Flat-Pattern", open: true, dim: true, icon: <FolderGlyph dim><path d="M4 5l3 1 4 4-4 1-4-3zM5 7l4 3" /></FolderGlyph> }
];

const scenes = [
  { title: "1.CLOSED HEM", at: [7, -9], art: <ClosedHem />, artAt: [69, -5] },
  { title: "2.OPEN HEM", at: [7, 285], art: <OpenHem />, artAt: [-1, 280] },
  { title: "3.TEAR DROP HEM", at: [480, 3], art: <TearDropHem />, artAt: [659, 25] },
  { title: "4.ROLLED HEM", at: [480, 285], art: <RolledHem />, artAt: [659, 305] }
];

const quick = [
  ["New", <NewDoc />],
  ["Open", <OpenDoc />],
  ["Save", <SaveIcon />],
  ["Print", <PrintIcon />],
  ["Undo", <UndoIcon />],
  ["Redo", <UndoIcon dim />]
];

const Small = ({ icon, children }) => (
  <SmallButton>
    {icon}
    {children}
  </SmallButton>
);

const Big = ({ icon, w, lines, disabled, arrow }) => (
  <BigButton w={w} disabled={disabled}>
    {icon}
    <span>
      {lines.map((line, i) => (
        <React.Fragment key={line}>
          {i > 0 && <br />}
          {line}
        </React.Fragment>
      ))}
    </span>
    {arrow && <DropArrow><Caret /></DropArrow>}
  </BigButton>
);

const ScrollArrow = ({ d, label }) => (
  <ScrollButton aria-label={label}>
    <Icon size={8} box={8} stroke="#444" sw={1.4}><path d={d} /></Icon>
  </ScrollButton>
);

const App = () => (
  <Page>
    <GlobalStyle />
    <TitleBar>
      <Brand>
        <LogoMark />
        <span><b>SOLID</b>WORKS</span>
      </Brand>
      <Menu>
        {menus.map(m => <PlainButton key={m}>{m}</PlainButton>)}
        <PinIcon />
      </Menu>
      <QuickTools>
        <ToolCell aria-label="Home"><HomeIcon /></ToolCell>
        {quick.map(([name, icon]) => (
          <React.Fragment key={name}>
            <ToolCell aria-label={name}>{icon}</ToolCell>
            <CaretCell aria-label={`${name} options`} dim={name === "Redo"}><Caret /></CaretCell>
          </React.Fragment>
        ))}
        <PointerBox>
          <ToolCell w={27} aria-label="Select"><PointerIcon /></ToolCell>
          <CaretCell w={12} aria-label="Select options"><Caret /></CaretCell>
        </PointerBox>
        <ToolCell aria-label="Rebuild"><TrafficIcon /></ToolCell>
        <ToolCell w={32} aria-label="File properties"><ListIcon /></ToolCell>
        <ToolCell aria-label="Options"><GearIcon /></ToolCell>
        <CaretCell aria-label="Options list"><Caret /></CaretCell>
      </QuickTools>
      <DocName>sheet metal Hem.</DocName>
      <SearchBox>
        <PromptIcon />
        <input placeholder="Search Commands" aria-label="Search Commands" />
        <Lens />
        <Caret />
      </SearchBox>
      <WindowButtons>
        <ToolCell aria-label="Account"><UserIcon /></ToolCell>
        <ToolCell aria-label="Help"><HelpIcon /></ToolCell>
        <ToolCell aria-label="Minimize"><MinIcon /></ToolCell>
        <ToolCell aria-label="Restore"><RestoreIcon /></ToolCell>
        <ToolCell aria-label="Close"><CloseIcon /></ToolCell>
      </WindowButtons>
    </TitleBar>

    <Ribbon>
      <Group w={166} pad={5}>
        <Big w={52} icon={<BaseFlange />} lines={["Base", "Flange/Tab"]} />
        <Big w={48} icon={<Convert />} lines={["Convert", "to Sheet", "Metal"]} />
        <Big w={58} icon={<Lofted />} lines={["Lofted-Bend"]} />
      </Group>
      <Group w={225} pad={4}>
        <Stack w={89}>
          <Small icon={<EdgeFlange />}>Edge Flange</Small>
          <Small icon={<Miter />}>Miter Flange</Small>
          <Small icon={<Hem />}>Hem</Small>
        </Stack>
        <Stack w={94}>
          <Small icon={<Jog />}>Jog</Small>
          <Small icon={<SketchedBend />}>Sketched Bend</Small>
          <Small icon={<CrossBreak />}>Cross-Break</Small>
        </Stack>
        <Big w={36} icon={<Swept />} lines={["Swept", "Flange"]} />
      </Group>
      <Group w={42}>
        <Big w={41} icon={<Corners />} lines={["Corners"]} arrow />
      </Group>
      <Group w={120} pad={4}>
        <Stack w={110}>
          <Small icon={<Forming />}>Forming Tool</Small>
          <Small icon={<Gusset />}>Sheet Metal Gusset</Small>
          <Small icon={<TabSlot />}>Tab and Slot</Small>
        </Stack>
      </Group>
      <Group w={176} pad={4}>
        <Stack w={90}>
          <Small icon={<Extruded />}>Extruded Cut</Small>
          <Small icon={<SimpleHole />}>Simple Hole</Small>
          <Small icon={<Vent />}>Vent</Small>
        </Stack>
        <Stack w={80}>
          <Small icon={<NormalCut />}>Normal Cut</Small>
        </Stack>
      </Group>
      <Group w={99} pad={4}>
        <Stack w={58}>
          <Small icon={<Unfold />}>Unfold</Small>
          <Small icon={<Fold />}>Fold</Small>
          <Small icon={<Flatten />}>Flatten</Small>
        </Stack>
        <Big w={36} icon={<NoBends />} lines={["No", "Bends"]} disabled />
      </Group>
      <LastGroup>
        <Big w={28} icon={<Rip />} lines={["Rip"]} />
        <Big w={34} icon={<InsertBends />} lines={["Insert", "Bends"]} disabled />
        <Big w={38} icon={<NormalTo />} lines={["Normal", "To"]} />
        <Big w={50} icon={<IsoCube />} lines={["Isometric"]} />
        <Collapse aria-label="Collapse ribbon">
          <Icon size={8} box={8} stroke="#222" sw={1.5}><path d="M1 6l3-3 3 3" /></Icon>
        </Collapse>
      </LastGroup>
    </Ribbon>

    <TabRow>
      <Tabs>
        {commandTabs.map(t => (
          <Tab key={t.label} w={t.w} active={t.active}>{t.label}</Tab>
        ))}
      </Tabs>
      <ViewTools>
        <ViewCell aria-label="Zoom to fit"><ZoomFit /></ViewCell>
        <ViewCell aria-label="Zoom to area"><ZoomFit area /></ViewCell>
        <ViewCell aria-label="Previous view"><PrevView /></ViewCell>
        <ViewCell aria-label="Section view"><Section /></ViewCell>
        <ViewCell aria-label="Dynamic annotation"><Dynamic /></ViewCell>
        <ViewCell aria-label="View orientation"><ViewCube /></ViewCell>
        <CaretCell w={10} dim aria-label="Orientation list"><Caret /></CaretCell>
        <ViewCell aria-label="Display style"><IsoCube light /></ViewCell>
        <CaretCell w={10} dim aria-label="Style list"><Caret /></CaretCell>
        <ViewCell aria-label="Hide or show"><EyeIcon /></ViewCell>
        <CaretCell w={10} dim aria-label="Hide list"><Caret /></CaretCell>
        <ViewCell aria-label="Edit appearance"><Ball extra="edit" /></ViewCell>
        <ViewCell aria-label="Apply scene"><Ball extra="scene" /></ViewCell>
        <CaretCell w={10} dim aria-label="Scene list"><Caret /></CaretCell>
        <ViewCell aria-label="View settings"><Monitor /></ViewCell>
        <CaretCell w={10} dim aria-label="Settings list"><Caret /></CaretCell>
      </ViewTools>
      <DocButtons>
        <ViewCell aria-label="Dock left"><PaneLeft /></ViewCell>
        <ViewCell aria-label="Dock right"><PaneRight /></ViewCell>
        <ViewCell aria-label="Minimize document"><MinIcon /></ViewCell>
        <ViewCell aria-label="Restore document"><RestoreIcon /></ViewCell>
        <ViewCell aria-label="Close document"><CloseIcon /></ViewCell>
      </DocButtons>
    </TabRow>

    <Workspace>
      <SidePanel>
        <Grip><Dot /></Grip>
        <PanelTabs>
          <PanelTab active aria-label="Feature tree"><PartIcon /></PanelTab>
          <PanelTab aria-label="Properties"><WideListIcon /></PanelTab>
          <PanelTab aria-label="Configurations"><ConfigIcon /></PanelTab>
          <PanelTab aria-label="Dimensions"><TargetIcon /></PanelTab>
          <PanelTab aria-label="Display"><Ball extra="dark" /></PanelTab>
        </PanelTabs>
        <FilterBox>
          <FilterIcon />
          <input aria-label="Filter" />
        </FilterBox>
        <Tree>
          <TreeRow root>
            <PartIcon size={13} />
            sheet metal Hem. (Default) &lt;&lt;D
          </TreeRow>
          {treeItems.map(item => (
            <TreeRow key={item.label} dim={item.dim}>
              <Expander>
                {item.open && (
                  <svg width="3" height="5" viewBox="0 0 4 6"><path d="M0 0l4 3-4 3z" fill="#444" /></svg>
                )}
              </Expander>
              {item.icon}
              {item.label}
            </TreeRow>
          ))}
        </Tree>
        <ScrollRow>
          <ScrollArrow label="Scroll left" d="M5 1L2 4l3 3" />
          <ScrollTrack><ScrollThumb /></ScrollTrack>
          <ScrollArrow label="Scroll right" d="M3 1l3 3-3 3" />
        </ScrollRow>
      </SidePanel>

      <Canvas>
        <Splitter><Dot /></Splitter>
        {scenes.map(s => (
          <React.Fragment key={s.title}>
            <Placed x={s.at[0]} y={s.at[1]}><Caption>{s.title}</Caption></Placed>
            <Placed x={s.artAt[0]} y={s.artAt[1]}>{s.art}</Placed>
          </React.Fragment>
        ))}
        <Placed x={5} y={468}><Triad /></Placed>
        <TaskPane>
          <TaskButton aria-label="Resources"><DialIcon /></TaskButton>
          <TaskButton aria-label="Home"><HomeIcon /></TaskButton>
          <TaskButton aria-label="Design library"><BooksIcon /></TaskButton>
          <TaskButton aria-label="File explorer"><FolderIcon /></TaskButton>
          <TaskButton aria-label="View palette"><PaletteIcon /></TaskButton>
          <TaskButton active aria-label="Appearances"><Ball /></TaskButton>
          <TaskButton aria-label="Custom properties"><WideListIcon /></TaskButton>
        </TaskPane>
      </Canvas>
    </Workspace>

    <ModelBar>
      <StepButtons>
        {["M7 1L3 4l4 3zM2 1v6", "M6 1L2 4l4 3z", "M2 1l4 3-4 3z", "M1 1l4 3-4 3zM6 1v6"].map(d => (
          <PlainButton key={d} aria-label="Step">
            <Icon size={8} box={8} stroke="currentColor"><path d={d} fill="currentColor" /></Icon>
          </PlainButton>
        ))}
      </StepButtons>
      <ModelTab w={55} active>Model</ModelTab>
      <ModelTab w={69}>3D Views</ModelTab>
    </ModelBar>
    <StatusBar>
      <StatusText>SOLIDWORKS Premium 2023 SP0.1</StatusText>
      <StatusText right w={143}>Editing Part</StatusText>
      <StatusText w={49}>MMGS</StatusText>
      <Icon size={4} box={8} stroke="none"><path d="M0 8l4-6 4 6z" fill="#333" /></Icon>
      <StatusIcon>
        <Icon size={12}><path d="M2 6l7-4 9 4v6l-8 6-7-5z" fill="#bbb" /><path d="M5 7l8 4M8 5l7 4M6 12l8-6" /></Icon>
      </StatusIcon>
    </StatusBar>
  </Page>
);

export default App;
